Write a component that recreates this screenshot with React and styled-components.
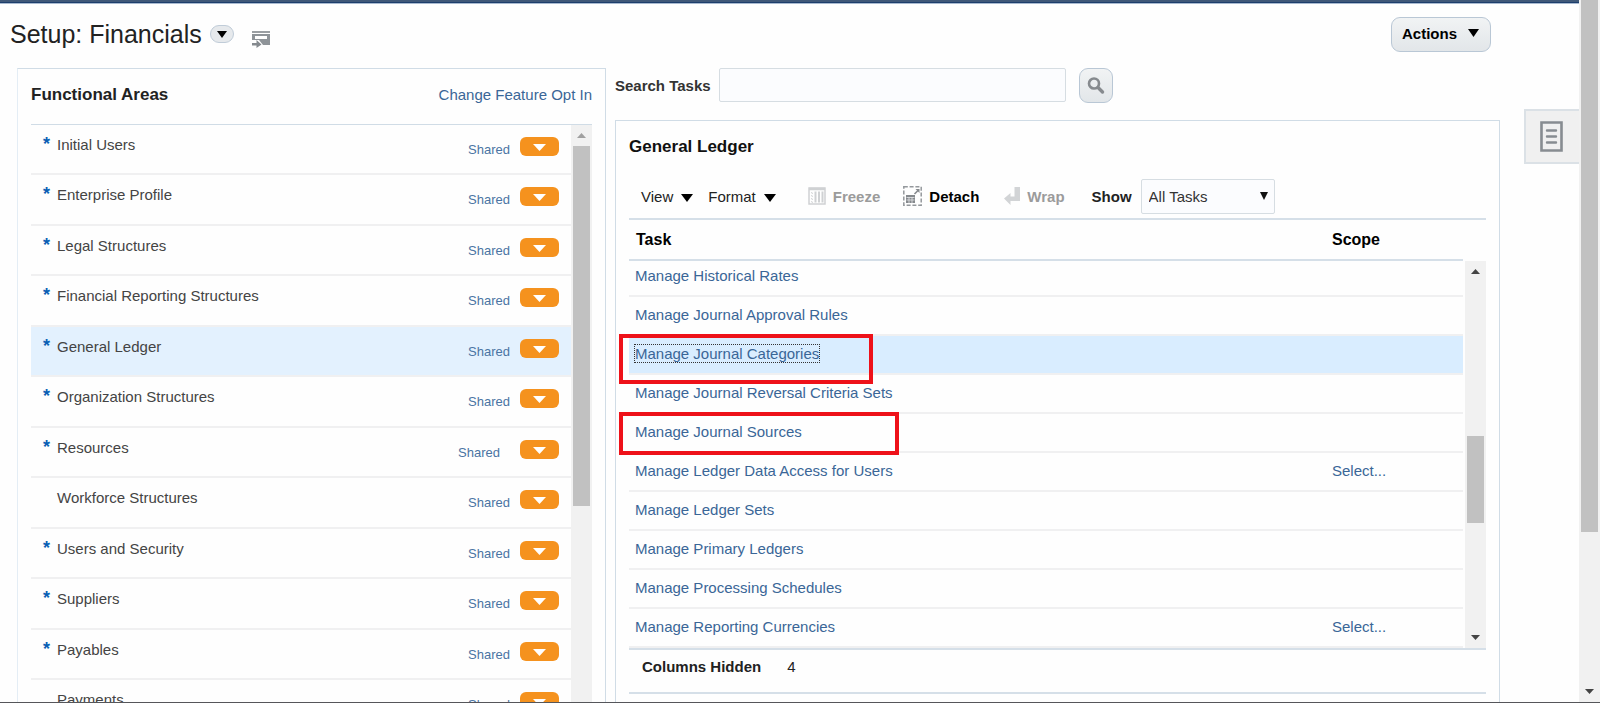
import { useState } from "react";
import styled, { createGlobalStyle } from "styled-components";

const functionalAreas = [
  { name: "Initial Users", required: true },
  { name: "Enterprise Profile", required: true },
  { name: "Legal Structures", required: true },
  { name: "Financial Reporting Structures", required: true },
  { name: "General Ledger", required: true },
  { name: "Organization Structures", required: true },
  { name: "Resources", required: true, inset: true },
  { name: "Workforce Structures" },
  { name: "Users and Security", required: true },
  { name: "Suppliers", required: true },
  { name: "Payables", required: true },
  { name: "Payments" },
];

const ledgerTasks = [
  { name: "Manage Historical Rates" },
  { name: "Manage Journal Approval Rules" },
  { name: "Manage Journal Categories", mark: "tall" },
  { name: "Manage Journal Reversal Criteria Sets" },
  { name: "Manage Journal Sources", mark: "wide" },
  { name: "Manage Ledger Data Access for Users", scope: "Select..." },
  { name: "Manage Ledger Sets" },
  { name: "Manage Primary Ledgers" },
  { name: "Manage Processing Schedules" },
  { name: "Manage Reporting Currencies", scope: "Select..." },
];

const GlobalStyle = createGlobalStyle`
  * {
    box-sizing: border-box;
  }

  body {
    margin: 0;
    background-color: #fefefe;
    color: #333;
    font-family: "Liberation Sans", Arial, sans-serif;
    font-size: 15px;
    overflow: hidden;
  }

  button, input, select {
    font-family: inherit;
    font-size: inherit;
  }

  a {
    color: #3a6697;
    text-decoration: none;
  }
`;

const Page = styled.div`
  display: flex;
  height: 100vh;
  overflow: hidden;
  border-bottom: 1px solid #55565a;
`;

const Content = styled.div`
  flex: 1;
  min-width: 0;
  display: flex;
  flex-direction: column;
`;

const TopBar = styled.div`
  flex: none;
  height: 4px;
  background-color: #3f5878;
  border-bottom: 1px solid #a9bad0;
  box-shadow: inset 0 -1px 0 #1d3e6c;
`;

const Header = styled.header`
  flex: none;
  height: 64px;
  display: flex;
  align-items: flex-start;
  padding: 13px 88px 0 10px;

  h1 {
    margin: 0 8px 0 0;
    font-size: 25px;
    line-height: 34px;
    font-weight: normal;
    color: #222;
  }
`;

const TitleMenu = styled.button`
  width: 24px;
  height: 18px;
  margin: 8px 18px 0 0;
  padding: 0;
  display: flex;
  align-items: center;
  justify-content: center;
  border: 1px solid #c0ccd8;
  border-radius: 9px;
  background-color: #e6e9ec;
`;

const IconButton = styled.button`
  padding: 0;
  margin-top: 13px;
  border: none;
  background: none;
  display: flex;
`;

const ActionsButton = styled.button`
  height: 35px;
  margin-left: auto;
  padding: 0 11px 3px 10px;
  display: flex;
  align-items: center;
  gap: 11px;
  border: 1px solid #b9c7d5;
  border-radius: 9px;
  background: linear-gradient(#f1f3f4, #e2e6e9);
  font-weight: bold;
  color: #000;
`;

const Body = styled.div`
  flex: 1;
  min-height: 0;
  display: flex;
`;

const Workspace = styled.main`
  flex: 1;
  min-width: 0;
  display: grid;
  grid-template-columns: minmax(0, 589fr) minmax(0, 885fr);
  gap: 9px;
  padding-left: 17px;
`;

const Panel = styled.section`
  flex: 1;
  min-height: 0;
  display: flex;
  flex-direction: column;
  padding: 0 13px;
  border: 1px solid #d0dce6;
  border-bottom: none;

  h2 {
    margin: 0;
    font-size: 17px;
    font-weight: bold;
    color: #222;
  }
`;

const AreasPanel = styled(Panel)`
  border-left-color: #e4edf5;
`;

const PanelHeader = styled.div`
  flex: none;
  height: 55px;
  display: flex;
  align-items: center;
  justify-content: space-between;
  padding-bottom: 4px;
`;

const ListFrame = styled.div`
  flex: 1;
  min-height: 0;
  display: flex;
  border-top: 1px solid #d0dce6;
`;

const AreaList = styled.ul`
  flex: 1;
  margin: 0;
  padding: 0;
  overflow: hidden;
  list-style: none;
`;

const AreaRow = styled.li`
  height: 50px;
  display: flex;
  align-items: flex-start;
  padding: 11px 12px 0;
  border-bottom: 2px solid #f0f0f1;
  background-color: ${(props) => (props.$selected ? "#e3f1fe" : "transparent")};
  cursor: pointer;

  &:nth-child(even) {
    height: 51px;
  }
`;

const Star = styled.span`
  width: 14px;
  color: #0a5fb4;
  font-size: 18px;
  font-weight: bold;
  line-height: 16px;
`;

const AreaName = styled.span`
  flex: 1;
  line-height: 18px;
  color: #444;
`;

const SharedLink = styled.a`
  margin-right: ${(props) => (props.$inset ? "20px" : "10px")};
  padding-top: 5px;
  font-size: 13px;
  line-height: 18px;
  color: #4a74a3;
`;

const AreaMenu = styled.button`
  width: 39px;
  height: 19px;
  margin-top: 1px;
  padding: 2px 0 0;
  display: flex;
  align-items: center;
  justify-content: center;
  border: none;
  border-radius: 6px;
  background-color: #f5921e;
`;

const Track = styled.div`
  flex: none;
  width: 21px;
  display: flex;
  flex-direction: column;
  align-items: stretch;
  padding: 0 2px;
  background-color: #f1f1f1;
`;

const TrackEnd = styled.div`
  flex: none;
  height: 21px;
  display: flex;
  align-items: center;
  justify-content: center;
`;

const TrackGap = styled.div`
  flex: ${(props) => props.$share} 1 0;
`;

const Thumb = styled.div`
  flex: ${(props) => props.$share} 1 0;
  background-color: #c1c1c1;
`;

const TasksColumn = styled.div`
  min-height: 0;
  display: flex;
  flex-direction: column;
`;

const SearchRow = styled.form`
  flex: none;
  height: 52px;
  display: flex;
  align-items: flex-start;

  label {
    margin-right: 8px;
    line-height: 35px;
    font-weight: bold;
  }

  input {
    width: 347px;
    height: 34px;
    border: 1px solid #d6dde2;
    border-radius: 2px;
    background-color: #fbfcfe;
  }
`;

const SearchButton = styled.button`
  width: 34px;
  height: 35px;
  margin-left: 13px;
  padding: 0;
  display: flex;
  align-items: center;
  justify-content: center;
  border: 1px solid #b9c7d5;
  border-radius: 9px;
  background: linear-gradient(#f1f3f4, #e2e6e9);
`;

const TasksPanel = styled(Panel)`
  h2 {
    flex: none;
    line-height: 52px;
    color: #111;
  }
`;

const Toolbar = styled.div`
  flex: none;
  height: 47px;
  display: flex;
  align-items: center;
  padding: 1px 0 0 12px;
  border-bottom: 2px solid #d5dfe8;

  label {
    margin: 0 9px 0 27px;
    font-weight: bold;
    color: #222;
  }
`;

const MenuButton = styled.button`
  padding: 0;
  margin-right: 15px;
  display: flex;
  align-items: center;
  gap: 8px;
  border: none;
  background: none;
  color: #222;

  svg {
    margin-top: 4px;
  }
`;

const ToolButton = styled.button`
  padding: 0;
  margin-left: ${(props) => props.$gap};
  display: flex;
  align-items: center;
  gap: 7px;
  border: none;
  background: none;
  font-weight: bold;
  color: #000;

  &:disabled {
    color: #9b9b9b;
  }
`;

const SelectBox = styled.div`
  display: grid;
  align-items: center;

  select,
  svg {
    grid-area: 1 / 1;
  }

  select {
    width: 134px;
    height: 35px;
    padding: 0 7px;
    appearance: none;
    border: 1px solid #d6dde2;
    border-radius: 2px;
    background-color: #fbfcfe;
    color: #333;
  }

  svg {
    justify-self: end;
    margin-right: 7px;
    pointer-events: none;
  }
`;

const TableFrame = styled.div`
  flex: none;
  display: flex;
  border-bottom: 2px solid #d5dfe8;

  ${Track} {
    margin-top: 41px;
  }
`;

const TaskTable = styled.table`
  flex: 1;
  margin-right: 2px;
  table-layout: fixed;
  border-collapse: separate;
  border-spacing: 0;

  th {
    height: 41px;
    padding: 0 7px;
    border-bottom: 2px solid #d5dfe8;
    font-size: 16px;
    text-align: left;
    color: #000;
  }

  td {
    height: 39px;
    padding: 0 6px 10px;
    vertical-align: bottom;
    border-bottom: 2px solid #f0f0f1;
    line-height: 18px;
  }

  th:last-child,
  td:last-child {
    width: 138px;
    padding-left: 7px;
  }

  tbody tr:first-child td {
    height: 36px;
  }
`;

const TaskRow = styled.tr`
  background-color: ${(props) => (props.$selected ? "#d9edff" : "transparent")};

  a {
    outline: ${(props) => (props.$selected ? "1px dotted #333" : "none")};
  }
`;

const TaskCell = styled.td`
  position: relative;
`;

const markSizes = {
  tall: { width: "254px", height: "50px" },
  wide: { width: "280px", height: "43px" },
};

const Mark = styled.span`
  position: absolute;
  z-index: 1;
  top: -2px;
  left: -10px;
  width: ${(props) => markSizes[props.$kind].width};
  height: ${(props) => markSizes[props.$kind].height};
  border: 4px solid #ee1119;
  pointer-events: none;
`;

const TableFooter = styled.div`
  flex: none;
  height: 44px;
  display: flex;
  align-items: center;
  gap: 26px;
  padding: 0 0 10px 13px;
  border-bottom: 2px solid #d5dfe8;
  color: #222;
`;

const Aside = styled.aside`
  flex: none;
  width: 79px;
  display: flex;
  flex-direction: column;
  align-items: flex-end;
  padding-top: 41px;
`;

const SideTab = styled.button`
  width: 55px;
  height: 55px;
  padding: 0 2px 0 0;
  display: flex;
  align-items: center;
  justify-content: center;
  border: 2px solid #dbe1e6;
  border-right: none;
  background-color: #f0f0f0;
`;

const Caret = ({ width = 12, height = 8, color = "#000", up }) => (
  <svg width={width} height={height} viewBox="0 0 12 8" preserveAspectRatio="none">
    <path d={up ? "M0 8h12L6 0z" : "M0 0h12L6 8z"} fill={color} />
  </svg>
);

const FlowIcon = () => (
  <svg width="18" height="18" viewBox="0 0 18 18">
    <path d="M0 1h18v2H0z" fill="#9a9ea2" />
    <path d="M0 4h18v11h-7L7 10H0zM3 6v3h12V6z" fill="#8e9398" fillRule="evenodd" />
    <path d="M0 13h4.500v-3l5 4.500-5 3.500v-2.500H0z" fill="#84898e" />
  </svg>
);

const FreezeIcon = () => (
  <svg width="18" height="18" viewBox="0 0 18 18" fill="none" stroke="#cfd1d3">
    <path d="M1 1h16v16H1z" strokeWidth="1.500" />
    <path d="M1 2h16" strokeWidth="2.500" />
    <path d="M3 5.500l2 1M3 8.500l2 1M3 11.500l2 1M3 14.500l2 1" />
    <path d="M7.500 4.500v11M11 4.500v11M14.500 4.500v11" strokeWidth="2" />
  </svg>
);

const DetachIcon = () => (
  <svg width="19" height="20" viewBox="0 0 19 20" fill="none" stroke="#94989c">
    <path d="M.8 .8h17.400v18.400H.8z" strokeWidth="1.500" strokeDasharray="4 1.800" />
    <path d="M3 9h9v8H3z" fill="#85898d" stroke="none" />
    <path d="M3.500 11.500h8M3.500 14h8M6 11v6M9 11v6" stroke="#e4e6e8" strokeWidth=".8" />
    <path d="M11.500 8l4-4" stroke="#85898d" strokeWidth="1.600" />
    <path d="M12.500 3h4v4z" fill="#85898d" stroke="none" />
  </svg>
);

const WrapIcon = () => (
  <svg width="16" height="18" viewBox="0 0 16 18">
    <path d="M10.500 0H16v14H6.500v4L0 11.500 6.500 6v3.500h4z" fill="#d2d4d6" />
  </svg>
);

const SearchIcon = () => (
  <svg width="18" height="18" viewBox="0 0 18 18" fill="none" stroke="#868a8e">
    <circle cx="7" cy="6.500" r="5" strokeWidth="2.600" />
    <path d="M11 10.500l4.500 4.500" strokeWidth="3.400" strokeLinecap="round" />
  </svg>
);

const DocumentIcon = () => (
  <svg width="23" height="31" viewBox="0 0 23 31" fill="none" stroke="#878c91">
    <path d="M1.500 1.500h20v28h-20z" strokeWidth="2.600" />
    <path d="M7 9.500h9M7 15.500h9M7 21.500h9" strokeWidth="2.400" strokeLinecap="round" />
  </svg>
);

const ScrollTrack = ({ before, thumb, after, up, down, color = "#444" }) => (
  <Track aria-hidden="true">
    {up && (
      <TrackEnd>
        <Caret up width={9} height={5} color={color} />
      </TrackEnd>
    )}
    <TrackGap $share={before} />
    <Thumb $share={thumb} />
    <TrackGap $share={after} />
    {down && (
      <TrackEnd>
        <Caret width={9} height={5} color={color} />
      </TrackEnd>
    )}
  </Track>
);

const App = () => {
  const [area, setArea] = useState("General Ledger");
  const [task, setTask] = useState("Manage Journal Categories");
  const [search, setSearch] = useState("");

  return (
    <>
      <GlobalStyle />
      <Page>
        <Content>
          <TopBar />
          <Header>
            <h1>Setup: Financials</h1>
            <TitleMenu aria-label="Choose setup">
              <Caret width={10} height={7} />
            </TitleMenu>
            <IconButton aria-label="Go to offering">
              <FlowIcon />
            </IconButton>
            <ActionsButton>
              Actions
              <Caret width={11} />
            </ActionsButton>
          </Header>
          <Body>
            <Workspace>
              <AreasPanel>
                <PanelHeader>
                  <h2>Functional Areas</h2>
                  <a href="#opt-in">Change Feature Opt In</a>
                </PanelHeader>
                <ListFrame>
                  <AreaList>
                    {functionalAreas.map((item) => (
                      <AreaRow
                        key={item.name}
                        $selected={item.name === area}
                        onClick={() => setArea(item.name)}
                      >
                        <Star>{item.required && "*"}</Star>
                        <AreaName>{item.name}</AreaName>
                        <SharedLink href="#shared" $inset={item.inset}>
                          Shared
                        </SharedLink>
                        <AreaMenu aria-label={`${item.name} actions`}>
                          <Caret width={13} height={7} color="#fff" />
                        </AreaMenu>
                      </AreaRow>
                    ))}
                  </AreaList>
                  <ScrollTrack up before={0} thumb={360} after={196} color="#a0a0a0" />
                </ListFrame>
              </AreasPanel>
              <TasksColumn>
                <SearchRow onSubmit={(e) => e.preventDefault()}>
                  <label htmlFor="search">Search Tasks</label>
                  <input
                    id="search"
                    value={search}
                    onChange={(e) => setSearch(e.target.value)}
                  />
                  <SearchButton aria-label="Search">
                    <SearchIcon />
                  </SearchButton>
                </SearchRow>
                <TasksPanel>
                  <h2>General Ledger</h2>
                  <Toolbar>
                    <MenuButton>
                      View
                      <Caret />
                    </MenuButton>
                    <MenuButton>
                      Format
                      <Caret />
                    </MenuButton>
                    <ToolButton $gap="17px" disabled>
                      <FreezeIcon />
                      Freeze
                    </ToolButton>
                    <ToolButton $gap="23px">
                      <DetachIcon />
                      Detach
                    </ToolButton>
                    <ToolButton $gap="25px" disabled>
                      <WrapIcon />
                      Wrap
                    </ToolButton>
                    <label htmlFor="show">Show</label>
                    <SelectBox>
                      <select id="show">
                        <option>All Tasks</option>
                      </select>
                      <Caret width={8} height={8} color="#111" />
                    </SelectBox>
                  </Toolbar>
                  <TableFrame>
                    <TaskTable>
                      <thead>
                        <tr>
                          <th>Task</th>
                          <th>Scope</th>
                        </tr>
                      </thead>
                      <tbody>
                        {ledgerTasks.map((item) => (
                          <TaskRow
                            key={item.name}
                            $selected={item.name === task}
                            onClick={() => setTask(item.name)}
                          >
                            <TaskCell>
                              <a href="#task">{item.name}</a>
                              {item.mark && <Mark $kind={item.mark} />}
                            </TaskCell>
                            <td>{item.scope && <a href="#scope">{item.scope}</a>}</td>
                          </TaskRow>
                        ))}
                      </tbody>
                    </TaskTable>
                    <ScrollTrack up down before={154} thumb={87} after={104} />
                  </TableFrame>
                  <TableFooter>
                    <b>Columns Hidden</b>
                    <span>4</span>
                  </TableFooter>
                </TasksPanel>
              </TasksColumn>
            </Workspace>
            <Aside>
              <SideTab aria-label="Task list">
                <DocumentIcon />
              </SideTab>
            </Aside>
          </Body>
        </Content>
        <ScrollTrack down before={0} thumb={532} after={149} />
      </Page>
    </>
  );
};

export default App;
